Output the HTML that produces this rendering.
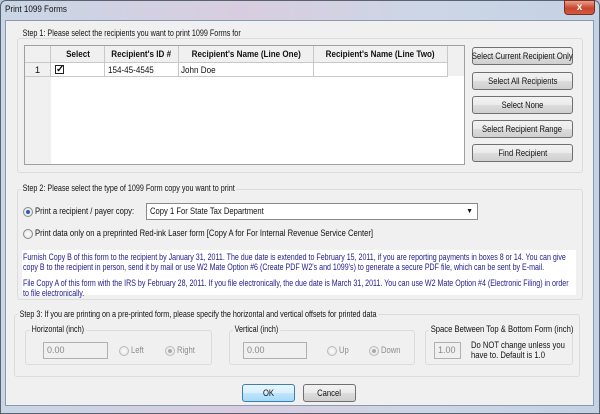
<!DOCTYPE html>
<html><head><meta charset="utf-8"><style>
*{box-sizing:border-box;margin:0;padding:0}
body{width:600px;height:414px;overflow:hidden;font-family:"Liberation Sans",sans-serif;font-size:9px;color:#111;background:#b9c9dc;position:relative;white-space:nowrap}
.a{position:absolute}
.s{display:inline-block;transform:scaleX(.85);transform-origin:0 0}
.c{display:inline-block;transform:scaleX(.85);transform-origin:50% 0}
.lbl .s{transform:scaleX(.8);background:#f0f0f0;padding:0 2px}
#frame{left:0;top:0;width:600px;height:414px;background:linear-gradient(90deg,#c9d6e6,#d8cde0 40%,#cdd6e6 70%,#c3d2e4);border:1px solid #5a6270;border-radius:6px 6px 0 0}
#client{left:5px;top:20px;width:589px;height:386px;background:#f0f0f0;border:1px solid #8c9aad}
.grp{position:absolute;border:1px solid #dcdcdc;border-radius:3px}
.lbl{position:absolute;font-size:9px;height:11px}
.btn{position:absolute;width:101px;height:18px;border:1px solid #707070;border-radius:3px;background:linear-gradient(#f2f2f2,#ebebeb 50%,#dddddd 51%,#cfcfcf);display:flex;justify-content:center;line-height:16px;font-size:9px}
.cell{position:absolute;border-right:1px solid #c8c8c8;border-bottom:1px solid #c8c8c8;font-size:9.5px;line-height:15px;overflow:hidden}
.hd{font-weight:bold;display:flex;justify-content:center;background:#f0f0f0;line-height:17px;font-size:9.5px}
.radio{position:absolute;width:10px;height:10px;border-radius:50%;border:1px solid #8a8a8a;background:radial-gradient(#fff,#dcdcdc)}
.radio.on::after{content:"";position:absolute;left:2px;top:2px;width:4px;height:4px;border-radius:50%;background:#2a5db0}
.radio.dis{border-color:#bbb}
.radio.dis.on::after{background:#aaa}
.inp{position:absolute;height:17px;border:1px solid #b0b0b0;background:#f0f0f0;color:#888;font-size:9px;padding-left:3px;line-height:15px}
.dis{color:#8d8d8d}
</style></head><body>
<div id="frame" class="a"></div>
<div class="a" style="left:5px;top:4px;font-size:9.5px;color:#111"><span class="s">Print 1099 Forms</span></div>
<div class="a" style="left:564px;top:0;width:31px;height:15px;border-radius:0 0 4px 4px;background:linear-gradient(#e8a08e,#c8462e 55%,#d35a3e);border:1px solid #7a2e22;color:#fff;font-weight:bold;text-align:center;font-size:10px;line-height:13px">x</div>
<div id="client" class="a"></div>

<!-- Step 1 -->
<div class="grp" style="left:17px;top:38px;width:566px;height:135px"></div>
<div class="lbl" style="left:21px;top:28px"><span class="s">Step 1: Please select the recipients you want to print 1099 Forms for</span></div>
<div class="a" style="left:24px;top:45px;width:441px;height:120px;background:#fff;border:1px solid #a0a0a0"></div>
<div class="a" style="left:25px;top:46px;width:26px;height:118px;background:#f0f0f0"></div>
<div class="a" style="left:448px;top:46px;width:16px;height:30px;background:#f0f0f0"></div>
<div class="cell hd" style="left:25px;top:46px;width:26px;height:17px"></div>
<div class="cell hd" style="left:51px;top:46px;width:54px;height:17px"><span class="c">Select</span></div>
<div class="cell hd" style="left:105px;top:46px;width:74px;height:17px"><span class="c">Recipient's ID #</span></div>
<div class="cell hd" style="left:179px;top:46px;width:135px;height:17px"><span class="c">Recipient's Name (Line One)</span></div>
<div class="cell hd" style="left:314px;top:46px;width:134px;height:17px"><span class="c">Recipient's Name (Line Two)</span></div>
<div class="cell" style="left:25px;top:63px;width:26px;height:14px;text-align:center;background:#f0f0f0">1</div>
<div class="cell" style="left:51px;top:63px;width:54px;height:14px;background:#fff"></div>
<div class="a" style="left:55px;top:65px;width:9px;height:9px;border:1px solid #222;font-size:10px;line-height:7px;font-weight:bold">✓</div>
<div class="cell" style="left:105px;top:63px;width:74px;height:14px;padding-left:3px;background:#fff"><span class="s">154-45-4545</span></div>
<div class="cell" style="left:179px;top:63px;width:135px;height:14px;padding-left:2px;background:#fff"><span class="s">John Doe</span></div>
<div class="cell" style="left:314px;top:63px;width:134px;height:14px;background:#fff"></div>

<div class="btn" style="left:472px;top:47px"><span class="c">Select Current Recipient Only</span></div>
<div class="btn" style="left:472px;top:72px"><span class="c">Select All Recipients</span></div>
<div class="btn" style="left:472px;top:96px"><span class="c">Select None</span></div>
<div class="btn" style="left:472px;top:120px"><span class="c">Select Recipient Range</span></div>
<div class="btn" style="left:472px;top:144px"><span class="c">Find Recipient</span></div>

<!-- Step 2 -->
<div class="grp" style="left:17px;top:189px;width:566px;height:111px"></div>
<div class="lbl" style="left:21px;top:183px"><span class="s">Step 2: Please select the type of 1099 Form copy you want to print</span></div>
<div class="radio on" style="left:23px;top:207px"></div>
<div class="a" style="left:35px;top:206px"><span class="s">Print a recipient / payer copy:</span></div>
<div class="a" style="left:146px;top:203px;width:332px;height:17px;border:1px solid #8a8a8a;background:#fff;line-height:15px;padding-left:3px"><span class="s">Copy 1 For State Tax Department</span><span style="position:absolute;right:4px;top:0;font-size:7px">▼</span></div>
<div class="radio" style="left:23px;top:229px"></div>
<div class="a" style="left:35px;top:228px"><span class="s">Print data only on a preprinted Red-ink Laser form [Copy A for For Internal Revenue Service Center]</span></div>
<div class="a" style="left:22px;top:250px;width:554px;height:45px;background:#fff"></div>
<div class="a" style="left:23px;top:252px;width:684px;color:#1c1c8c;font-size:8.8px;line-height:10px;white-space:normal;transform:scaleX(.805);transform-origin:0 0">Furnish Copy B of this form to the recipient by January 31, 2011. The due date is extended to February 15, 2011, if you are reporting payments in boxes 8 or 14. You can give copy B to the recipient in person, send it by mail or use W2 Mate Option #6 (Create PDF W2's and 1099's) to generate a secure PDF file, which can be sent by E-mail.<div style="height:6px"></div>File Copy A of this form with the IRS by February 28, 2011. If you file electronically, the due date is March 31, 2011. You can use W2 Mate Option #4 (Electronic Filing) in order to file electronically.</div>

<!-- Step 3 -->
<div class="grp" style="left:14px;top:314px;width:566px;height:63px"></div>
<div class="lbl" style="left:18px;top:309px"><span class="s">Step 3: If you are printing on a pre-printed form, please specify the horizontal and vertical offsets for printed data</span></div>
<div class="grp" style="left:25px;top:330px;width:187px;height:35px"></div>
<div class="lbl" style="left:30px;top:324px"><span class="s">Horizontal (inch)</span></div>
<div class="inp" style="left:43px;top:342px;width:65px">0.00</div>
<div class="radio dis" style="left:119px;top:346px"></div><div class="a dis" style="left:131px;top:345px"><span class="s">Left</span></div>
<div class="radio dis on" style="left:165px;top:346px"></div><div class="a dis" style="left:177px;top:345px"><span class="s">Right</span></div>
<div class="grp" style="left:229px;top:330px;width:186px;height:35px"></div>
<div class="lbl" style="left:233px;top:324px"><span class="s">Vertical (inch)</span></div>
<div class="inp" style="left:243px;top:342px;width:64px">0.00</div>
<div class="radio dis" style="left:327px;top:346px"></div><div class="a dis" style="left:339px;top:345px"><span class="s">Up</span></div>
<div class="radio dis on" style="left:369px;top:346px"></div><div class="a dis" style="left:381px;top:345px"><span class="s">Down</span></div>
<div class="grp" style="left:425px;top:330px;width:148px;height:35px"></div>
<div class="lbl" style="left:429px;top:324px"><span class="s" style="transform:scaleX(.85)">Space Between Top &amp; Bottom Form (inch)</span></div>
<div class="inp" style="left:434px;top:342px;width:27px">1.00</div>
<div class="a" style="left:471px;top:340px;line-height:10px"><span class="s">Do NOT change unless you<br>have to. Default is 1.0</span></div>

<div class="btn" style="left:242px;top:384px;width:53px;border-color:#3c7fb1;background:linear-gradient(#eaf6fd,#d9f0fc 50%,#bee6fd 51%,#a7d9f5)"><span class="c">OK</span></div>
<div class="btn" style="left:303px;top:384px;width:53px"><span class="c">Cancel</span></div>
</body></html>
